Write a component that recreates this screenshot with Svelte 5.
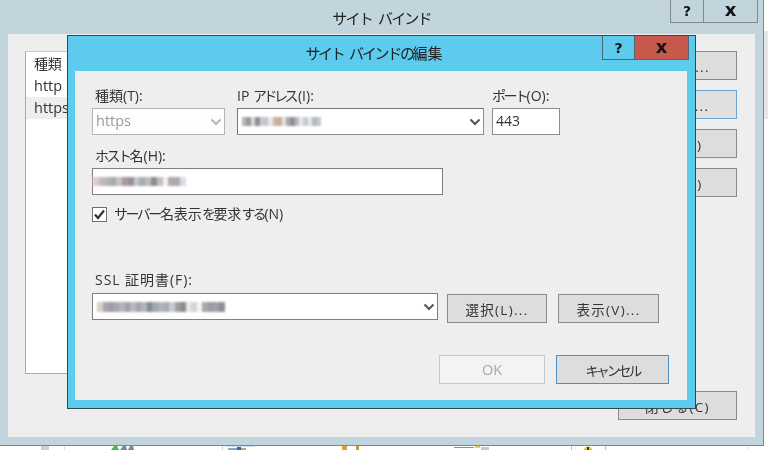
<script>
  const mosaic = (colors, w) => colors.map((c) => ({ c, w }));
  const ipBits = mosaic(['#b5b5b5','#9a9a9a','#d8d8d8','#8f8f94','#c8ccd4','#c2c6cc','#e8e8e8','#c7b6a4','#c4b09a','#e4e4e4','#a7a7ae','#8e8e98','#b9b9bf','#e8eaec','#c5cbd0','#e6e6e6','#b4bac0','#c4c8c8'], 4.4);
  const hostBits = mosaic(['#e2c8cc','#bdbdc0','#b4b4b8','#a9a9ae','#c3c3c6','#a89ba4','#9b919b','#c4c6c8','#a5adb0','#bcbcbc','#8d8d90','#c0c0c4','#f0f0f2','#b4a8b0','#a9a9b3','#dcdce6'], 5.8);
  const sslBits = mosaic(['#d8d0c0','#a8a4b0','#a09cb0','#a8a8b4','#b4b4bc','#a0a0ac','#bcb8c0','#a4a4ac','#b0b4b8','#88888e','#a0a8b0','#b0b4bc','#a8acb4','#c8ccd0','#a0a0a4','#8c8c90','#e8e8ea','#d4d4d4','#f4f4f4','#a4a8b0','#989ca4','#a0a0a4','#909094'], 5.55);
</script>

<div class="desktop">
  <div class="strip">
    <svg width="768" height="5" viewBox="0 0 768 5" aria-hidden="true">
      <rect x="41" y="0" width="8" height="5" fill="#d0d0d0" />
      <rect x="64" y="0" width="1" height="5" fill="#e2e2e2" />
      <path d="M111 5 114 1h3l2 4z" fill="#4fb84a" />
      <path d="M120 5 123 1h3l1 4zM128 5 130 1h3l1 4z" fill="#6f8aa4" />
      <rect x="222" y="0" width="1" height="5" fill="#cfcfcf" />
      <rect x="226" y="1" width="29" height="1" fill="#cfe0f2" />
      <rect x="228" y="3" width="9" height="2" fill="#8ea4c4" />
      <rect x="237" y="2" width="4" height="3" fill="#2f68b8" />
      <rect x="241" y="3" width="5" height="2" fill="#e0a050" />
      <rect x="342" y="1" width="5" height="4" fill="#d5a53a" />
      <rect x="356" y="1" width="3" height="4" fill="#c99a30" />
      <rect x="454" y="2" width="20" height="1" fill="#8f8f8f" />
      <rect x="475" y="1" width="5" height="2" fill="#f0d040" />
      <rect x="481" y="2" width="8" height="3" fill="#c8c8c8" />
      <rect x="571" y="0" width="1" height="5" fill="#bcbcbc" />
      <rect x="605" y="0" width="1" height="5" fill="#bcbcbc" />
      <circle cx="588" cy="6" r="4.500" fill="#e8d020" />
      <rect x="587" y="2" width="2" height="3" fill="#333" />
      <rect x="748" y="0" width="1" height="5" fill="#e2e2e2" />
    </svg>
  </div>

  <div class="scroll"></div>

  <section class="window">
    <header class="win-title">
      <span class="win-title-text">サイト バインド</span>
      <div class="win-controls">
        <span class="ctl ctl-q">?</span>
        <span class="ctl ctl-x">x</span>
      </div>
    </header>
    <div class="win-body">
      <div class="list">
        <div class="list-head">種類</div>
        <div class="list-row">http</div>
        <div class="list-row selected">https</div>
      </div>
      <div class="side">
        <div class="side-top">
          <button class="btn side-btn">追加(A)...</button>
          <button class="btn side-btn focus">編集(E)...</button>
          <button class="btn side-btn">削除(R)</button>
          <button class="btn side-btn">参照(B)</button>
        </div>
        <button class="btn side-btn">閉じる(C)</button>
      </div>
    </div>
  </section>

  <section class="dialog">
    <header class="dlg-title">
      <span class="dlg-title-text"><span class="title-kana">サイト バインドの</span>編集</span>
      <div class="dlg-controls">
        <span class="ctl dlg-q">?</span>
        <span class="ctl dlg-x">x</span>
      </div>
    </header>

    <div class="dlg-body">
      <div class="row first">
        <div class="field f-type">
          <span class="label">種類(T):</span>
          <div class="control disabled">
            <span class="value">https</span>
            <svg class="chev" width="12" height="8" viewBox="0 0 12 8" aria-hidden="true"><path d="M1.500 1.500 6 6l4.500-4.500" fill="none" stroke="#b4b4b4" stroke-width="2" /></svg>
          </div>
        </div>
        <div class="field f-ip">
          <span class="label">IP <span class="kana-narrow">アドレス</span>(I):</span>
          <div class="control">
            <span class="mosaic m-ip">{#each ipBits as b}<i style="width:{b.w}px;background:{b.c}"></i>{/each}</span>
            <svg class="chev" width="12" height="8" viewBox="0 0 12 8" aria-hidden="true"><path d="M1.500 1.500 6 6l4.500-4.500" fill="none" stroke="#555" stroke-width="2" /></svg>
          </div>
        </div>
        <div class="field f-port">
          <span class="label"><span class="kana">ポート</span>(O):</span>
          <div class="control"><span class="value port">443</span></div>
        </div>
      </div>

      <div class="field f-host">
        <span class="label"><span class="kana">ホスト</span>名(H):</span>
        <div class="control">
          <span class="mosaic m-host">{#each hostBits as b}<i style="width:{b.w}px;background:{b.c}"></i>{/each}</span>
        </div>
      </div>

      <label class="check">
        <span class="box">
          <svg width="13" height="13" viewBox="0 0 13 13" aria-hidden="true"><path d="M2 6.500 5 10l6-7.500" fill="none" stroke="#333" stroke-width="2.200" /></svg>
        </span>
        <span class="check-text"><span class="kana">サーバー</span>名表示<span class="kana">を</span>要求<span class="kana">する</span>(N)</span>
      </label>

      <span class="label ssl-label">SSL 証明書(F):</span>
      <div class="row ssl">
        <div class="control f-ssl">
          <span class="mosaic m-ssl">{#each sslBits as b}<i style="width:{b.w}px;background:{b.c}"></i>{/each}</span>
          <svg class="chev" width="12" height="8" viewBox="0 0 12 8" aria-hidden="true"><path d="M1.500 1.500 6 6l4.500-4.500" fill="none" stroke="#555" stroke-width="2" /></svg>
        </div>
        <button class="btn b-select">選択(L)...</button>
        <button class="btn b-view">表示(V)...</button>
      </div>

      <div class="footer">
        <button class="btn b-ok">OK</button>
        <button class="btn b-cancel">キャンセル</button>
      </div>
    </div>
  </section>
</div>

<style>
  :global(body) {
    margin: 0;
    background: #fff;
  }

  .desktop {
    position: relative;
    width: 768px;
    height: 450px;
    overflow: hidden;
    background: #fff;
    color: #333;
    font-family: "Open Sans", "Noto Sans CJK JP", sans-serif;
    font-size: 14px;
    filter: blur(0.35px);
  }

  .strip {
    position: absolute;
    left: 0;
    top: 445px;
    line-height: 0;
  }

  .scroll {
    position: absolute;
    left: 764px;
    top: 31px;
    width: 4px;
    height: 88px;
    background: #e6e6e6;
  }

  .window {
    position: absolute;
    left: 0;
    top: 0;
    width: 763px;
    height: 445px;
    display: flex;
    flex-direction: column;
    background: #c2d5dd;
    border-right: 1px solid #7b878d;
    border-bottom: 1px solid #7b878d;
  }

  .win-title {
    position: relative;
    flex: 0 0 34px;
    display: flex;
    align-items: center;
    justify-content: center;
  }

  .win-title-text {
    font-size: 15px;
    letter-spacing: -1.800px;
    word-spacing: 4px;
    color: #222;
  }

  .win-controls {
    position: absolute;
    left: 670px;
    top: -1px;
    display: flex;
    height: 24px;
    border: 1px solid #7e8a90;
    border-top: 0;
    box-sizing: border-box;
  }

  .ctl {
    display: flex;
    align-items: center;
    justify-content: center;
    font-family: "DejaVu Sans", sans-serif;
    font-weight: 700;
    color: #111;
    font-size: 14px;
    box-sizing: border-box;
  }

  .ctl-q {
    width: 33px;
    border-right: 1px solid #7e8a90;
  }

  .ctl-x {
    width: 53px;
    font-size: 18px;
    padding-bottom: 3px;
  }

  .win-body {
    flex: 1;
    margin: 0 8px 8px 8px;
    padding: 17px 18px 17px 17px;
    display: flex;
    justify-content: space-between;
    background: #eeeeee;
  }

  .list {
    width: 200px;
    height: 323px;
    box-sizing: border-box;
    background: #fff;
    border: 1px solid #a9a9a9;
    border-top-color: #c8c8c8;
    padding: 1px 0 0 1px;
  }

  .list-head {
    height: 21px;
    line-height: 21px;
    padding-left: 7px;
    font-size: 14px;
    letter-spacing: -0.300px;
  }

  .list-row {
    height: 22px;
    line-height: 22px;
    padding-left: 7px;
    font-size: 14.500px;
  }

  .list-head + .list-row {
    margin-top: 1px;
  }

  .selected {
    background: #eeeeee;
    margin-left: -1px;
    padding-left: 8px;
  }

  .side {
    display: flex;
    flex-direction: column;
    justify-content: space-between;
    width: 119px;
  }

  .side-top {
    display: flex;
    flex-direction: column;
    gap: 10px;
  }

  .btn {
    display: flex;
    align-items: center;
    justify-content: center;
    margin: 0;
    padding: 0;
    box-sizing: border-box;
    font: inherit;
    font-size: 13.500px;
    letter-spacing: 1.300px;
    color: #333;
    background: #dddddd;
    border: 1px solid #8a8a8a;
    border-radius: 0;
  }

  .side-btn {
    width: 119px;
    height: 29px;
  }

  .side-btn.focus {
    border-color: #6ea5d2;
    background: #e0e0e0;
  }

  .dialog {
    position: absolute;
    left: 67px;
    top: 35px;
    width: 629px;
    height: 374px;
    box-sizing: border-box;
    display: flex;
    flex-direction: column;
    background: #5ccbee;
    border: 1px solid #2f4852;
    padding: 0 8px 8px 7px;
  }

  .dlg-title {
    position: relative;
    flex: 0 0 35px;
    display: flex;
    align-items: center;
    justify-content: center;
  }

  .dlg-title-text {
    font-size: 15px;
    color: #222;
    margin-right: 14px;
    margin-bottom: 2px;
  }

  .title-kana {
    letter-spacing: -2.300px;
    word-spacing: 4px;
  }

  .dlg-controls {
    position: absolute;
    right: -2px;
    top: 0;
    display: flex;
    height: 24px;
    border: 1px solid #4d6670;
    border-top: 0;
    box-sizing: border-box;
  }

  .dlg-q {
    width: 32px;
    border-right: 1px solid #4d6670;
  }

  .dlg-x {
    width: 53px;
    background: #c4594c;
    font-size: 18px;
    padding-bottom: 3px;
  }

  .dlg-body {
    flex: 1;
    box-sizing: border-box;
    background: #eeeeee;
    padding: 17px 18px 16px 17px;
    display: flex;
    flex-direction: column;
  }

  .row {
    display: flex;
  }

  .label {
    display: block;
    height: 20px;
    line-height: 16px;
    padding-left: 3px;
    color: #333;
  }

  .kana {
    letter-spacing: -2.500px;
  }

  .kana-narrow {
    letter-spacing: -3.500px;
    margin-right: 3px;
  }

  .control {
    position: relative;
    display: flex;
    align-items: center;
    height: 27px;
    box-sizing: border-box;
    background: #fff;
    border: 1px solid #8c8c8c;
  }

  .control.disabled {
    border-color: #b4b4b4;
    background: #fdfdfd;
  }

  .f-type {
    width: 133px;
  }

  .f-ip {
    width: 247px;
    margin-left: 12px;
  }

  .f-ip .label {
    padding-left: 0;
  }

  .f-ip .control {
    border-left-color: #757575;
    border-top-color: #757575;
  }

  .f-port {
    width: 68px;
    margin-left: 8px;
  }

  .f-port .label {
    padding-left: 0;
  }

  .f-host {
    margin-top: 13px;
    width: 351px;
  }

  .f-host .control {
    border-color: #7f7f7f;
  }

  .value {
    padding-left: 3px;
    padding-bottom: 2px;
    color: #333;
  }

  .disabled .value {
    color: #9a9a9a;
    font-size: 14.500px;
  }

  .port {
    font-size: 14px;
  }

  .chev {
    position: absolute;
    right: 2px;
    top: 9px;
  }

  .mosaic {
    display: flex;
    filter: blur(0.8px);
  }

  .mosaic i {
    display: block;
  }

  .m-ip {
    height: 9px;
    margin-left: 4px;
  }

  .m-host {
    height: 9px;
  }

  .m-ssl {
    height: 10px;
    margin-left: 4px;
  }

  .check {
    margin-top: 12px;
    display: flex;
    align-items: center;
    height: 14px;
    gap: 7px;
  }

  .box {
    display: block;
    width: 15px;
    height: 15px;
    box-sizing: border-box;
    background: #fff;
    border: 1px solid #707070;
    line-height: 0;
  }

  .check-text {
    color: #333;
    margin-bottom: 2px;
  }

  .ssl-label {
    margin-top: 51px;
    height: 21px;
    letter-spacing: 0.950px;
    line-height: 15px;
  }

  .ssl {
    align-items: flex-start;
  }

  .f-ssl {
    width: 346px;
    border-color: #7f7f7f;
  }

  .b-select {
    width: 100px;
    height: 29px;
    margin: 1px 0 0 9px;
  }

  .b-view {
    width: 101px;
    height: 29px;
    margin: 1px 0 0 11px;
  }

  .footer {
    margin-top: 32px;
    display: flex;
    justify-content: flex-end;
    gap: 11px;
  }

  .b-ok {
    width: 106px;
    height: 29px;
    background: #f3f3f3;
    border-color: #c8c8c8;
    color: #aaaaaa;
    font-size: 14.500px;
    letter-spacing: 0;
  }

  .b-cancel {
    width: 113px;
    height: 29px;
    border-color: #4e8fc4;
    font-size: 13.500px;
    letter-spacing: -2.700px;
  }
</style>
